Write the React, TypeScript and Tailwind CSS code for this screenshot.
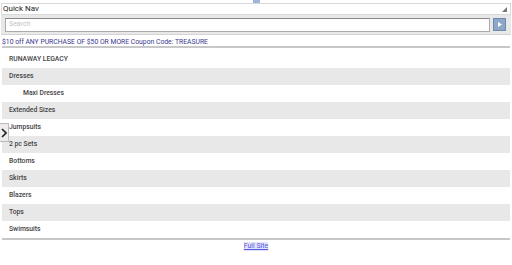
const items = [
  { label: "RUNAWAY LEGACY", sub: false },
  { label: "Dresses", sub: false },
  { label: "Maxi Dresses", sub: true },
  { label: "Extended Sizes", sub: false },
  { label: "Jumpsuits", sub: false },
  { label: "2 pc Sets", sub: false },
  { label: "Bottoms", sub: false },
  { label: "Skirts", sub: false },
  { label: "Blazers", sub: false },
  { label: "Tops", sub: false },
  { label: "Swimsuits", sub: false },
];

export default function App() {
  return (
    <div className="relative w-[512px] h-[265px] bg-white overflow-hidden font-['Roboto',sans-serif]">
      {/* top tab */}
      <div className="flex justify-center h-[3px]">
        <div className="w-[7px] h-[3px] bg-[#9fb4dc]" />
      </div>

      {/* quick nav select */}
      <div className="mx-px h-[12px] border border-[#d9d9d9] flex items-center justify-between pl-[1px] pr-[3px]">
        <span className="text-[8px] leading-none text-[#222]">Quick Nav</span>
        <svg width="5" height="5" viewBox="0 0 5 5">
          <path d="M5 0 L5 5 L0 5 Z" fill="#777" />
        </svg>
      </div>

      {/* search */}
      <div className="mx-px bg-[#e8e8e8] border-b border-[#d4d4d4] h-[20px] flex items-center gap-[3px] pl-[4px] pr-[5px]">
        <div className="flex-1 h-[14px] bg-white border border-[#aaa] border-t-[#888] flex items-center px-[3px]">
          <span className="text-[7px] leading-none text-[#c4c4c4]">Search</span>
        </div>
        <div className="w-[13px] h-[13px] bg-[#8ea6c8] border border-[#6f88ad] flex items-center justify-center">
          <svg width="4" height="5" viewBox="0 0 4 5">
            <path d="M0 0 L4 2.5 L0 5 Z" fill="#fff" />
          </svg>
        </div>
      </div>

      {/* coupon */}
      <div className="mt-[3px] px-[2px] text-[6.8px] leading-[8px] text-[#38388f]">
        $10 off ANY PURCHASE OF $50 OR MORE Coupon Code: TREASURE
      </div>

      {/* nav list */}
      <div className="mx-[2px] pt-[3px] border-t-2 border-[#c8c8c8] border-b-2 border-b-[#c8c8c8]">
        {items.map((it, i) => (
          <div
            key={it.label}
            className={`h-[17px] flex items-center text-[6.8px] font-medium text-[#444] ${
              i % 2 === 1 ? "bg-[#e8e8e8]" : "bg-white"
            } ${it.sub ? "pl-[21px]" : "pl-[7px]"}`}
          >
            {it.label}
          </div>
        ))}
      </div>

      <div className="mt-[2px] flex justify-center">
        <a className="text-[7px] leading-[9px] text-[#5555ee] underline bg-[#e4e4f8]">
          Full Site
        </a>
      </div>

      {/* side toggle */}
      <div className="absolute left-0 top-[123px] w-[9px] h-[19px] bg-[#ececec] border border-[#bbb] border-l-0 flex items-center justify-center">
        <svg width="6" height="10" viewBox="0 0 6 10">
          <path d="M1 1 L5 5 L1 9" fill="none" stroke="#222" strokeWidth="1.6" />
        </svg>
      </div>
    </div>
  );
}
